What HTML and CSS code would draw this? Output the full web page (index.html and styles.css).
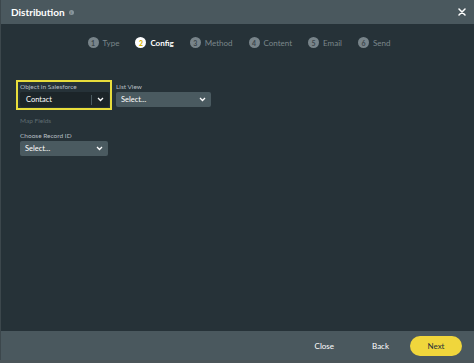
FILE: index.html
```html
<!DOCTYPE html>
<html lang="en">
<head>
  <meta charset="UTF-8" />
  <title>Distribution</title>
  <link rel="stylesheet" href="styles.css">
</head>
<body>
  <div class="modal">
    <!-- Header -->
    <div class="modal-header">
      <div class="title">Distribution <span class="info">i</span></div>
      <span class="close-x">
        <svg width="8" height="8" viewBox="0 0 8 8"><path d="M1 1L7 7M7 1L1 7" stroke="#fff" stroke-width="1.5" stroke-linecap="round"/></svg>
      </span>
    </div>

    <!-- Body -->
    <div class="modal-body">
      <div class="steps">
        <div class="step"><span class="num">1</span>Type</div>
        <div class="step active"><span class="num">2</span>Config</div>
        <div class="step"><span class="num">3</span>Method</div>
        <div class="step"><span class="num">4</span>Content</div>
        <div class="step"><span class="num">5</span>Email</div>
        <div class="step"><span class="num">6</span>Send</div>
      </div>

      <div class="row">
        <div class="field highlight">
          <label>Object in Salesforce</label>
          <div class="select dark">
            <span>Contact</span>
            <span class="sep"></span>
            <svg class="chev" width="7" height="5" viewBox="0 0 7 5"><path d="M1 1L3.5 3.5L6 1" stroke="#fff" stroke-width="1.3" fill="none"/></svg>
          </div>
        </div>
        <div class="field">
          <label>List View</label>
          <div class="select wide">
            <span>Select...</span>
            <svg class="chev" width="7" height="5" viewBox="0 0 7 5"><path d="M1 1L3.5 3.5L6 1" stroke="#fff" stroke-width="1.3" fill="none"/></svg>
          </div>
        </div>
      </div>

      <div class="map-label">Map Fields</div>

      <div class="field plain">
        <label>Choose Record ID</label>
        <div class="select">
          <span>Select...</span>
          <svg class="chev" width="7" height="5" viewBox="0 0 7 5"><path d="M1 1L3.5 3.5L6 1" stroke="#fff" stroke-width="1.3" fill="none"/></svg>
        </div>
      </div>
    </div>

    <!-- Footer -->
    <div class="modal-footer">
      <button class="link-btn">Close</button>
      <button class="link-btn">Back</button>
      <button class="next-btn">Next</button>
    </div>
  </div>
</body>
</html>
```

FILE: styles.css
```css
body {
  margin: 0;
  padding: 0;
  font-family: Lato, "Open Sans", sans-serif;
  background: #4b5559;
}

.modal {
  width: 474px;
  height: 360px;
  display: flex;
  flex-direction: column;
  background: #263238;
  border-left: 1px solid #3c474c;
  box-sizing: border-box;
}

.modal-header {
  height: 24px;
  background: #4a585e;
  display: flex;
  align-items: center;
  justify-content: space-between;
  padding: 0 8px 0 10px;
}

.title {
  color: #fff;
  font-weight: bold;
  font-size: 10px;
  display: flex;
  align-items: center;
  gap: 4px;
}

.info {
  width: 5px;
  height: 5px;
  border-radius: 50%;
  background: #8a969b;
  color: #4a585e;
  font-size: 4px;
  line-height: 5px;
  text-align: center;
}

.close-x {
  display: flex;
}

.modal-body {
  flex: 1;
  padding: 13px 0 0 15px;
}

.steps {
  display: flex;
  justify-content: center;
  gap: 16px;
  margin-left: -12px;
  margin-bottom: 32px;
}

.step {
  display: flex;
  align-items: center;
  gap: 4px;
  font-size: 8px;
  color: #7b878b;
}

.step .num {
  width: 11px;
  height: 11px;
  border-radius: 50%;
  background: #78848a;
  color: #3c474c;
  font-size: 7px;
  font-weight: bold;
  display: flex;
  align-items: center;
  justify-content: center;
}

.step.active {
  color: #fff;
  font-weight: bold;
}

.step.active .num {
  background: #fff;
  color: #d9b400;
  font-weight: 900;
}

.row {
  display: flex;
  gap: 4px;
}

.field label {
  display: block;
  font-size: 6.5px;
  color: #b6bfc3;
  margin-bottom: 2px;
}

.field.highlight {
  border: 2px solid #e8dd3c;
  padding: 1px 1px 1px 2px;
}

.field:not(.highlight):not(.plain) {
  padding-top: 3px;
}

.select {
  width: 88px;
  height: 15px;
  background: #4a5a60;
  border-radius: 2px;
  display: flex;
  align-items: center;
  padding: 0 5px;
  box-sizing: border-box;
  font-size: 7.5px;
  color: #fff;
}

.select span:first-child {
  flex: 1;
}

.select.wide {
  width: 95px;
}

.select.dark {
  background: #1c2529;
  width: 89px;
  padding-left: 6px;
}

.sep {
  width: 1px;
  height: 10px;
  background: #4a5a60;
  margin-right: 5px;
}

.map-label {
  font-size: 6.5px;
  color: #5f6c71;
  margin: 7px 0 8px 4px;
}

.field.plain {
  margin-left: 4px;
}

.modal-footer {
  height: 29px;
  background: #4a585e;
  display: flex;
  align-items: center;
  justify-content: flex-end;
  padding-right: 12px;
}

.link-btn {
  background: none;
  border: none;
  color: #fff;
  font-family: inherit;
  font-size: 8px;
  padding: 0;
  margin-right: 38px;
}

.link-btn + .link-btn {
  margin-right: 21px;
}

.next-btn {
  width: 52px;
  height: 20px;
  border: none;
  border-radius: 10px;
  background: #f0d63c;
  color: #263238;
  font-family: inherit;
  font-size: 8px;
}
```
